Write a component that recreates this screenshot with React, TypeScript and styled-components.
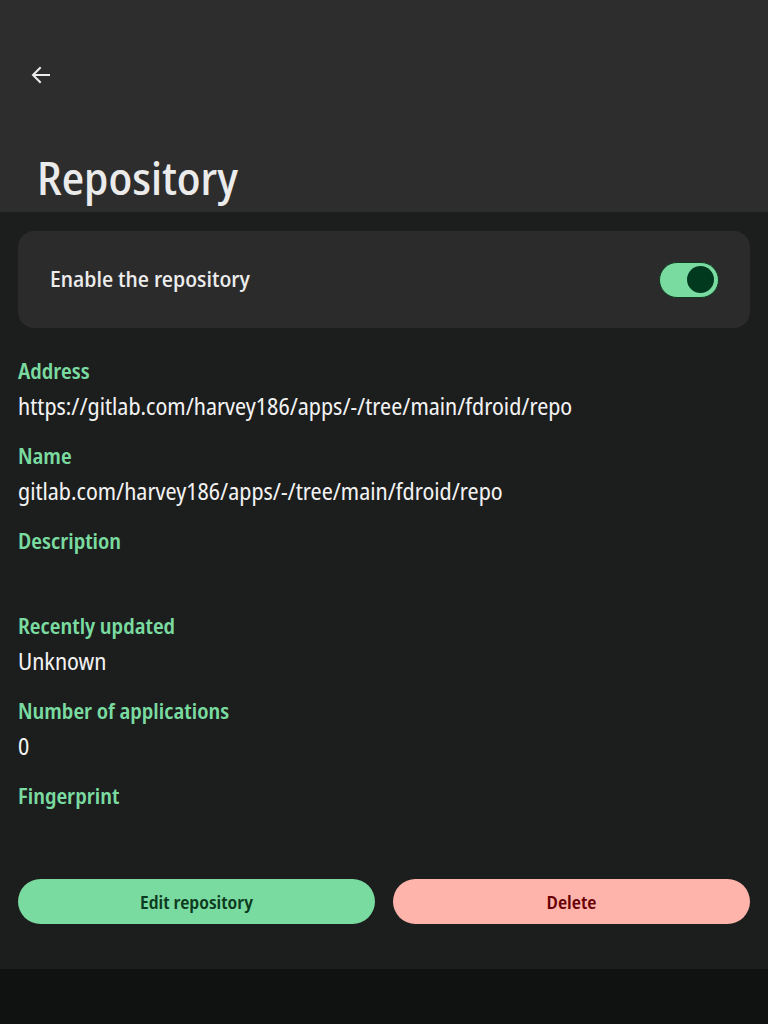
import React from "react";
import styled, { createGlobalStyle } from "styled-components";

const Global = createGlobalStyle`
  html, body { margin: 0; padding: 0; background: #1c1d1d; }
  body { font-family: "Noto Sans Display", "Noto Sans", sans-serif; font-stretch: condensed; }
  * { box-sizing: border-box; }
`;

const Page = styled.div`
  width: 768px;
  height: 1024px;
  display: flex;
  flex-direction: column;
  background: #1c1d1d;
  overflow: hidden;
`;

const Header = styled.header`
  height: 212px;
  background: #2d2d2d;
  display: flex;
  flex-direction: column;
  padding: 63px 0 0 29px;
`;

const BackButton = styled.button`
  width: 24px;
  height: 24px;
  padding: 0;
  border: none;
  background: none;
  color: #ececec;
  display: flex;
  align-items: center;
  justify-content: center;
`;

const Title = styled.h1`
  margin: 64px 0 0 8px;
  font-size: 45px;
  line-height: 54px;
  font-weight: 500;
  font-stretch: condensed;
  color: #ebebeb;
`;

const Main = styled.main`
  flex: 1;
  padding: 19px 18px 0;
  display: flex;
  flex-direction: column;
`;

const Card = styled.div`
  height: 97px;
  background: #2b2b2b;
  border-radius: 16px;
  display: flex;
  align-items: center;
  justify-content: space-between;
  padding: 0 31px 0 32px;
`;

const CardText = styled.span`
  color: #ececec;
  font-size: 22.5px;
  font-weight: 500;
  line-height: 30px;
  margin-top: -2px;
`;

const Switch = styled.div`
  width: 60px;
  height: 36px;
  border-radius: 18px;
  background: #7adba0;
  border: 1.5px solid #0f3a22;
  display: flex;
  align-items: center;
  justify-content: flex-end;
  padding-right: 4px;
`;

const Thumb = styled.div`
  width: 27px;
  height: 27px;
  border-radius: 50%;
  background: #00391e;
`;

const Fields = styled.div`
  margin-top: 25px;
  display: flex;
  flex-direction: column;
  gap: 13px;
`;

const Field = styled.div`
  display: flex;
  flex-direction: column;
`;

const Label = styled.div`
  height: 36px;
  line-height: 36px;
  color: #7adba0;
  font-size: 21px;
  font-weight: 600;
  white-space: nowrap;
`;

const Value = styled.div`
  height: 36px;
  line-height: 36px;
  color: #f2f2f2;
  font-size: 22.8px;
  white-space: nowrap;
`;

const Buttons = styled.div`
  margin-top: 29px;
  display: grid;
  grid-template-columns: 1fr 1fr;
  gap: 18px;
`;

const ActionButton = styled.button<{ $variant: "primary" | "danger" }>`
  height: 45px;
  border: none;
  border-radius: 23px;
  font-family: inherit;
  font-stretch: condensed;
  font-size: 18px;
  font-weight: 600;
  background: ${(p) => (p.$variant === "primary" ? "#7adba0" : "#ffb4ab")};
  color: ${(p) => (p.$variant === "primary" ? "#0c3a1f" : "#690005")};
`;

const BottomBar = styled.div`
  height: 55px;
  background: #101212;
`;

const fields: [string, string][] = [
  ["Address", "https://gitlab.com/harvey186/apps/-/tree/main/fdroid/repo"],
  ["Name", "gitlab.com/harvey186/apps/-/tree/main/fdroid/repo"],
  ["Description", ""],
  ["Recently updated", "Unknown"],
  ["Number of applications", "0"],
  ["Fingerprint", ""],
];

export default function App() {
  return (
    <Page>
      <Global />
      <Header>
        <BackButton aria-label="Back">
          <svg width="24" height="24" viewBox="0 0 24 24" fill="none" stroke="currentColor" strokeWidth="2" strokeLinecap="square">
            <path d="M20 12H5M11 5l-7 7 7 7" />
          </svg>
        </BackButton>
        <Title>Repository</Title>
      </Header>
      <Main>
        <Card>
          <CardText>Enable the repository</CardText>
          <Switch>
            <Thumb />
          </Switch>
        </Card>
        <Fields>
          {fields.map(([l, v]) => (
            <Field key={l}>
              <Label>{l}</Label>
              <Value>{v}</Value>
            </Field>
          ))}
        </Fields>
        <Buttons>
          <ActionButton $variant="primary">Edit repository</ActionButton>
          <ActionButton $variant="danger">Delete</ActionButton>
        </Buttons>
      </Main>
      <BottomBar />
    </Page>
  );
}
